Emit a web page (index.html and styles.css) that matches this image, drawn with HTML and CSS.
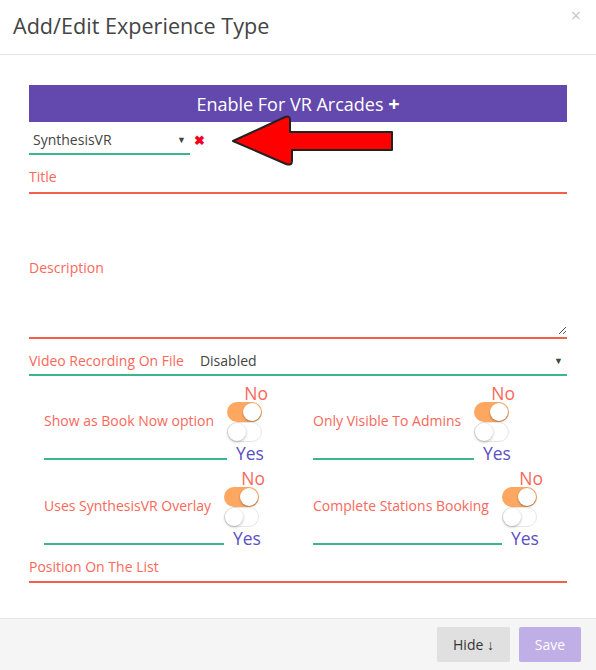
FILE: index.html
```html
<!DOCTYPE html>
<html>
<head>
<meta charset="utf-8">
<link rel="stylesheet" href="styles.css">
</head>
<body>
<div class="modal">
  <div class="modal-header">
    <h4 class="modal-title">Add/Edit Experience Type</h4>
    <span class="close">×</span>
  </div>
  <div class="modal-body">
    <div class="enable-bar">Enable For VR Arcades <span class="plus">+</span></div>
    <div class="arcade-row">
      <div class="select small-select"><span>SynthesisVR</span><span class="caret">▼</span></div>
      <span class="remove">✖</span>
      <svg class="pointer-arrow" width="166" height="56" viewBox="0 0 166 56">
        <path d="M3 29 L55 5 Q60 3 60 8 L60 20 L162 20 L162 38 L62 38 L62 49 Q62 54 56 52 Z" fill="#ff0000" stroke="#222" stroke-width="2" stroke-linejoin="round"/>
      </svg>
    </div>
    <div class="field line-red title-field"><span class="label">Title</span></div>
    <div class="field line-red desc-field">
      <span class="label">Description</span>
      <svg class="resize" width="8" height="8" viewBox="0 0 8 8"><path d="M1 8 L8 1 M5 8 L8 5" stroke="#555" stroke-width="1"/></svg>
    </div>
    <div class="video-row">
      <span class="label">Video Recording On File</span>
      <span class="video-value">Disabled</span>
      <span class="caret">▼</span>
    </div>
    <div class="toggle-grid">
      <div class="toggle-col">
        <div class="toggle-box w182"><span class="label">Show as Book Now option</span></div>
        <div class="switch-stack">
          <span class="no">No</span>
          <span class="switch on"></span>
          <span class="switch off"></span>
          <span class="yes">Yes</span>
        </div>
      </div>
      <div class="toggle-col">
        <div class="toggle-box w161"><span class="label">Only Visible To Admins</span></div>
        <div class="switch-stack">
          <span class="no">No</span>
          <span class="switch on"></span>
          <span class="switch off"></span>
          <span class="yes">Yes</span>
        </div>
      </div>
      <div class="toggle-col">
        <div class="toggle-box w179"><span class="label">Uses SynthesisVR Overlay</span></div>
        <div class="switch-stack">
          <span class="no">No</span>
          <span class="switch on"></span>
          <span class="switch off"></span>
          <span class="yes">Yes</span>
        </div>
      </div>
      <div class="toggle-col">
        <div class="toggle-box w188"><span class="label">Complete Stations Booking</span></div>
        <div class="switch-stack">
          <span class="no">No</span>
          <span class="switch on"></span>
          <span class="switch off"></span>
          <span class="yes">Yes</span>
        </div>
      </div>
    </div>
    <div class="field line-red position-field"><span class="label">Position On The List</span></div>
  </div>
  <div class="modal-footer">
    <button class="btn btn-hide">Hide ↓</button>
    <button class="btn btn-save">Save</button>
  </div>
</div>
</body>
</html>
```
FILE: styles.css
```css
* { box-sizing: border-box; }
html, body { margin: 0; padding: 0; background: #fff; }
body {
  font-family: "Open Sans", "Noto Sans", sans-serif;
  color: #333;
  width: 596px;
  height: 670px;
  overflow: hidden;
}
.modal { width: 596px; height: 670px; display: flex; flex-direction: column; }
.modal-header {
  position: relative;
  height: 55px;
  border-bottom: 1px solid #e5e5e5;
  padding: 11px 13px 0;
}
.modal-title {
  margin: 0;
  font-size: 21.6px;
  font-weight: 400;
  color: #444;
  line-height: 30px;
}
.close {
  position: absolute;
  right: 15px;
  top: 5px;
  font-size: 18px;
  color: #c8c8c8;
  line-height: 20px;
}
.modal-body {
  flex: 1;
  padding: 30px 29px 0;
}
.enable-bar {
  height: 37px;
  background: #6349ad;
  color: #fff;
  font-size: 18px;
  line-height: 37px;
  text-align: center;
}
.plus { font-weight: 700; font-size: 20px; }
.arcade-row {
  position: relative;
  height: 33px;
  display: flex;
  align-items: flex-start;
}
.select {
  display: flex;
  justify-content: space-between;
  align-items: center;
}
.small-select {
  width: 161px;
  height: 33px;
  border-bottom: 2px solid #3cb68d;
  padding: 4px 4px 0 4px;
  font-size: 14px;
  color: #444;
}
.caret { font-size: 9px; color: #444; }
.remove {
  color: #f0001e;
  font-size: 13px;
  margin: 9px 0 0 4px;
  font-weight: 700;
}
.pointer-arrow {
  position: absolute;
  left: 201px;
  top: -10px;
}
.label { color: #f9685a; font-size: 14px; }
.field { position: relative; }
.line-red { border-bottom: 2px solid #f5604a; }
.title-field { height: 39px; padding-top: 10px; }
.desc-field { height: 145px; padding-top: 62px; }
.resize { position: absolute; right: 1px; bottom: 3px; }
.video-row {
  height: 37px;
  border-bottom: 2px solid #3cb68d;
  display: flex;
  align-items: center;
  padding-top: 8px;
}
.video-row .video-value { margin-left: 16px; font-size: 14px; color: #444; flex: 1; }
.video-row .caret { margin-right: 4px; }
.toggle-grid {
  display: grid;
  grid-template-columns: 1fr 1fr;
  row-gap: 5px;
  padding-top: 7px;
}
.toggle-col {
  padding: 0 15px;
  display: flex;
  align-items: flex-start;
  height: 80px;
}
.toggle-box {
  height: 77px;
  border-bottom: 2px solid #3cb68d;
  padding-top: 26px;
}
.w182 { width: 183px; }
.w161 { width: 161px; }
.w179 { width: 180px; }
.w188 { width: 189px; }
.switch-stack {
  width: 45px;
  display: flex;
  flex-direction: column;
  align-items: flex-start;
  padding-top: 1px;
}
.no {
  align-self: flex-end;
  margin-right: 4px;
  color: #f9685a;
  font-size: 17.5px;
  line-height: 19px;
  height: 18px;
}
.yes {
  margin-left: 9px;
  color: #5b4fc4;
  font-size: 17.5px;
  line-height: 20px;
  margin-top: 1px;
}
.switch {
  position: relative;
  width: 35px;
  height: 20px;
  border-radius: 10px;
  display: block;
}
.switch::after {
  content: "";
  position: absolute;
  top: 1px;
  width: 18px;
  height: 18px;
  border-radius: 50%;
  background: #fff;
  box-shadow: 0 1px 2px rgba(0,0,0,0.35);
}
.switch.on { background: #fda761; }
.switch.on::after { right: 1px; }
.switch.off { background: #fff; border: 1px solid #e6e6e6; }
.switch.off::after { left: 0; top: 0; box-shadow: 0 1px 3px rgba(0,0,0,0.3); }
.position-field { height: 35px; padding-top: 7px; }
.modal-footer {
  height: 52px;
  border-top: 1px solid #e5e5e5;
  background: #f5f5f5;
  display: flex;
  justify-content: flex-end;
  align-items: flex-start;
  padding: 8px 15px 0 0;
  gap: 9px;
}
.btn {
  font-family: "Open Sans", "Noto Sans", sans-serif;
  font-size: 14px;
  border: none;
  border-radius: 2px;
  height: 35px;
  padding: 0 12px;
}
.btn-hide { background: #e0e0e0; color: #333; width: 73px; }
.btn-save { background: #c0aee6; color: #fff; width: 62px; }
```
